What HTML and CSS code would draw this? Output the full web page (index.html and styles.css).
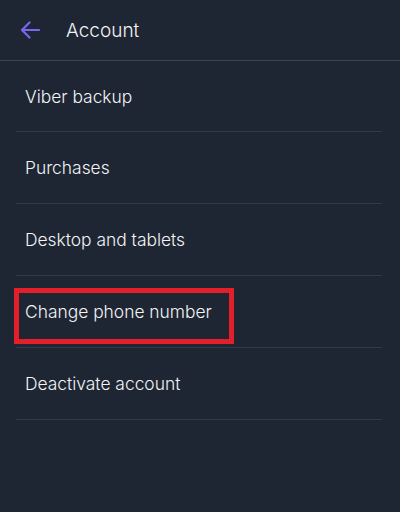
FILE: index.html
```html
<!DOCTYPE html>
<html>
<head>
<meta charset="utf-8">
<link rel="stylesheet" href="styles.css">
</head>
<body>
<div class="app">
  <header class="topbar">
    <svg class="back" width="20" height="18" viewBox="0 0 20 18" fill="none" stroke="#7a66f0" stroke-width="2.2" stroke-linecap="round" stroke-linejoin="round">
      <path d="M19 9H2M9.5 1.5L2 9l7.5 7.5"/>
    </svg>
    <h1 class="title">Account</h1>
  </header>
  <ul class="list">
    <li class="item">Viber backup</li>
    <li class="item">Purchases</li>
    <li class="item">Desktop and tablets</li>
    <li class="item highlighted">Change phone number<span class="mark"></span></li>
    <li class="item">Deactivate account</li>
  </ul>
</div>
</body>
</html>
```
FILE: styles.css
```css
html, body {
  margin: 0;
  padding: 0;
  background: #1f2633;
}
.app {
  width: 400px;
  height: 512px;
  background: #1f2633;
  font-family: Inter, "Open Sans", sans-serif;
  color: #f2f4f6;
}
.topbar {
  display: flex;
  align-items: center;
  border-bottom: 1px solid #3a4656;
  box-sizing: border-box;
  height: 61px;
}
.back {
  margin-left: 20px;
}
.title {
  margin: 0 0 0 26px;
  font-size: 19px;
  font-weight: 350;
}
.list {
  list-style: none;
  margin: 0;
  padding: 0 18px 0 16px;
}
.item {
  position: relative;
  height: 71px;
  display: flex;
  align-items: center;
  padding-left: 9px;
  border-bottom: 1px solid #313a47;
  font-size: 17.4px;
  font-weight: 350;
}
.item:first-child {
  height: 70px;
}
.mark {
  position: absolute;
  left: -2px;
  top: 12px;
  width: 210px;
  height: 46px;
  border: 5px solid #e3202a;
}
```
